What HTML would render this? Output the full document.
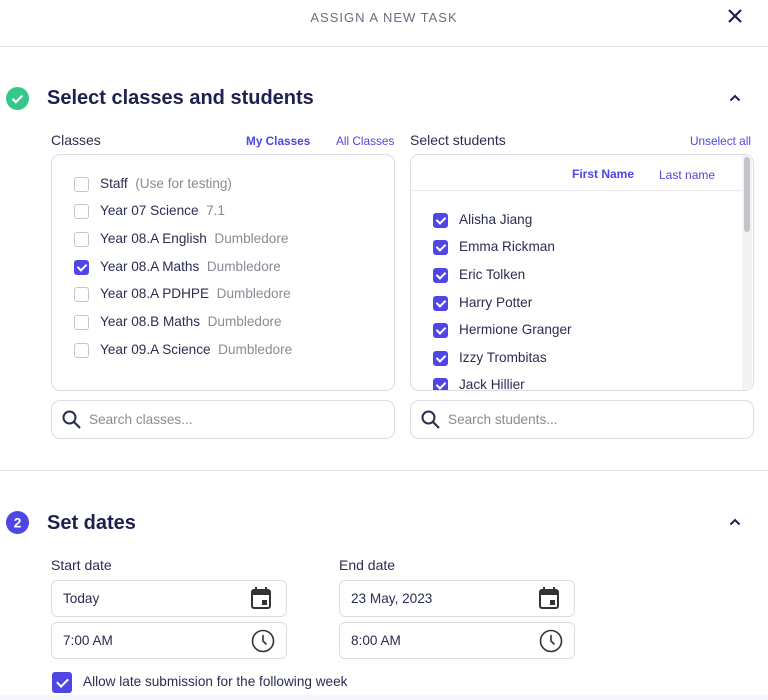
<!DOCTYPE html>
<html><head><style>
*{box-sizing:border-box;margin:0;padding:0}
body{width:768px;height:700px;background:#fff;font-family:"Liberation Sans",sans-serif;color:#2a2d52;position:relative;overflow:hidden}
.a{position:absolute}
.box{position:absolute;border:1px solid #dcdde3;border-radius:9px;background:#fff}
.cb{position:absolute;width:15px;height:15px;border:1.5px solid #c4c5cc;border-radius:3px;background:#fff}
.cc{position:absolute;width:15px;height:15px;border-radius:3px;background:#4f46e5}
.cc:after{content:"";position:absolute;left:5px;top:2px;width:4px;height:7px;border:solid #fff;border-width:0 2px 2px 0;transform:rotate(45deg)}
.big:after{left:7px;top:4px;width:5px;height:9px}
.t{position:absolute;font-size:13.6px;color:#2a2d52;white-space:nowrap}
.g{color:#8a8b95}
.lnk{position:absolute;font-size:12px;color:#4f46e5;white-space:nowrap}
.h{position:absolute;font-size:20px;font-weight:bold;color:#1e2050}
.lbl{position:absolute;font-size:14px;color:#2a2d52}
</style></head><body>
<div class="a" style="left:0;top:10px;width:768px;text-align:center;font-size:13px;letter-spacing:1px;color:#6b6e80">ASSIGN A NEW TASK</div>
<svg class="a" style="left:727px;top:8px" width="16" height="16"><path d="M2 2L14 14M14 2L2 14" stroke="#1e2050" stroke-width="2.2"/></svg>
<div class="a" style="left:0;top:46px;width:768px;height:1px;background:#e4e4e8"></div>

<svg class="a" style="left:6px;top:87px" width="23" height="23"><circle cx="11.5" cy="11.5" r="11.5" fill="#34c98a"/><path d="M6.5 11.8l3.3 3.3 6.5-6.5" fill="none" stroke="#fff" stroke-width="2.2"/></svg>
<div class="h" style="left:47px;top:87px">Select classes and students</div>
<svg class="a" style="left:729px;top:94px" width="12" height="8"><path d="M1.5 6.5L6 2l4.5 4.5" fill="none" stroke="#1e2050" stroke-width="2"/></svg>

<div class="lbl" style="left:51px;top:132px">Classes</div>
<div class="lnk" style="left:246px;top:134px;font-weight:bold;font-size:11.8px">My Classes</div>
<div class="lnk" style="left:336px;top:134px;font-size:11.8px">All Classes</div>
<div class="box" style="left:51px;top:154px;width:344px;height:237px"></div>
<div class="cb" style="left:74px;top:177px"></div><div class="t" style="left:100px;top:176px">Staff&nbsp; <span class="g">(Use for testing)</span></div>
<div class="cb" style="left:74px;top:204px"></div><div class="t" style="left:100px;top:203px">Year 07 Science&nbsp; <span class="g">7.1</span></div>
<div class="cb" style="left:74px;top:232px"></div><div class="t" style="left:100px;top:231px">Year 08.A English&nbsp; <span class="g">Dumbledore</span></div>
<div class="cc" style="left:74px;top:260px"></div><div class="t" style="left:100px;top:259px">Year 08.A Maths&nbsp; <span class="g">Dumbledore</span></div>
<div class="cb" style="left:74px;top:287px"></div><div class="t" style="left:100px;top:286px">Year 08.A PDHPE&nbsp; <span class="g">Dumbledore</span></div>
<div class="cb" style="left:74px;top:315px"></div><div class="t" style="left:100px;top:314px">Year 08.B Maths&nbsp; <span class="g">Dumbledore</span></div>
<div class="cb" style="left:74px;top:343px"></div><div class="t" style="left:100px;top:342px">Year 09.A Science&nbsp; <span class="g">Dumbledore</span></div>
<div class="box" style="left:51px;top:400px;width:344px;height:39px"></div>
<svg class="a" style="left:61px;top:409px" width="22" height="22"><circle cx="8.5" cy="8.5" r="6" fill="none" stroke="#2a2d52" stroke-width="2"/><path d="M13 13l6 6" stroke="#2a2d52" stroke-width="2.2"/></svg>
<div class="t g" style="left:89px;top:412px">Search classes...</div>

<div class="lbl" style="left:410px;top:132px">Select students</div>
<div class="lnk" style="left:690px;top:134px;font-size:11.8px">Unselect all</div>
<div class="box" style="left:410px;top:154px;width:344px;height:237px;overflow:hidden"><div style="position:absolute;left:0;top:35px;width:330px;height:1px;background:#e8e8ec"></div></div>
<div class="a" style="left:742px;top:155px;width:10px;height:235px;background:#f3f3f5"></div>
<div class="a" style="left:744px;top:157px;width:6px;height:75px;background:#c4c4c8;border-radius:3px"></div>
<div class="lnk" style="left:572px;top:167px;font-weight:bold">First Name</div>
<div class="lnk" style="left:659px;top:168px">Last name</div>
<div class="cc" style="left:433px;top:213px"></div><div class="t" style="left:459px;top:212px">Alisha Jiang</div>
<div class="cc" style="left:433px;top:240px"></div><div class="t" style="left:459px;top:239px">Emma Rickman</div>
<div class="cc" style="left:433px;top:268px"></div><div class="t" style="left:459px;top:267px">Eric Tolken</div>
<div class="cc" style="left:433px;top:296px"></div><div class="t" style="left:459px;top:295px">Harry Potter</div>
<div class="cc" style="left:433px;top:323px"></div><div class="t" style="left:459px;top:322px">Hermione Granger</div>
<div class="cc" style="left:433px;top:351px"></div><div class="t" style="left:459px;top:350px">Izzy Trombitas</div>
<div class="a" style="left:420px;top:376px;width:320px;height:14px;overflow:hidden"><div class="cc" style="left:13px;top:2px"></div><div class="t" style="left:39px;top:1px">Jack Hillier</div></div>
<div class="box" style="left:410px;top:400px;width:344px;height:39px"></div>
<svg class="a" style="left:420px;top:409px" width="22" height="22"><circle cx="8.5" cy="8.5" r="6" fill="none" stroke="#2a2d52" stroke-width="2"/><path d="M13 13l6 6" stroke="#2a2d52" stroke-width="2.2"/></svg>
<div class="t g" style="left:448px;top:412px">Search students...</div>

<div class="a" style="left:0;top:470px;width:768px;height:1px;background:#e4e4e8"></div>

<svg class="a" style="left:6px;top:511px" width="23" height="23"><circle cx="11.5" cy="11.5" r="11.5" fill="#4f46e5"/><text x="11.5" y="16.5" text-anchor="middle" font-family="Liberation Sans" font-weight="bold" font-size="14" fill="#fff">2</text></svg>
<div class="h" style="left:47px;top:512px">Set dates</div>
<svg class="a" style="left:729px;top:518px" width="12" height="8"><path d="M1.5 6.5L6 2l4.5 4.5" fill="none" stroke="#1e2050" stroke-width="2"/></svg>

<div class="lbl" style="left:51px;top:557px">Start date</div>
<div class="lbl" style="left:339px;top:557px">End date</div>
<div class="box" style="left:51px;top:580px;width:236px;height:37px;border-radius:6px"></div>
<div class="t" style="left:63px;top:591px">Today</div>
<div class="box" style="left:51px;top:622px;width:236px;height:37px;border-radius:6px"></div>
<div class="t" style="left:63px;top:633px">7:00 AM</div>
<div class="box" style="left:339px;top:580px;width:236px;height:37px;border-radius:6px"></div>
<div class="t" style="left:351px;top:591px">23 May, 2023</div>
<div class="box" style="left:339px;top:622px;width:236px;height:37px;border-radius:6px"></div>
<div class="t" style="left:351px;top:633px">8:00 AM</div>
<svg class="a" style="left:250px;top:586px" width="22" height="24"><rect x="2" y="4" width="18" height="18" rx="2" fill="none" stroke="#333" stroke-width="2"/><rect x="2" y="4" width="18" height="5" fill="#333"/><path d="M6 1v5M16 1v5" stroke="#333" stroke-width="2"/><rect x="12" y="14" width="5" height="5" fill="#333"/></svg>
<svg class="a" style="left:538px;top:586px" width="22" height="24"><rect x="2" y="4" width="18" height="18" rx="2" fill="none" stroke="#333" stroke-width="2"/><rect x="2" y="4" width="18" height="5" fill="#333"/><path d="M6 1v5M16 1v5" stroke="#333" stroke-width="2"/><rect x="12" y="14" width="5" height="5" fill="#333"/></svg>
<svg class="a" style="left:251px;top:629px" width="24" height="24"><circle cx="12" cy="12" r="10.5" fill="none" stroke="#333" stroke-width="1.6"/><path d="M12 6v6l3.5 3.5" fill="none" stroke="#333" stroke-width="1.6"/></svg>
<svg class="a" style="left:539px;top:629px" width="24" height="24"><circle cx="12" cy="12" r="10.5" fill="none" stroke="#333" stroke-width="1.6"/><path d="M12 6v6l3.5 3.5" fill="none" stroke="#333" stroke-width="1.6"/></svg>

<div class="cc big" style="left:52px;top:672px;width:20px;height:21px"></div>
<div class="t" style="left:83px;top:674px">Allow late submission for the following week</div>
<div class="a" style="left:0;top:695px;width:768px;height:5px;background:#f6f6fc"></div>
</body></html>
